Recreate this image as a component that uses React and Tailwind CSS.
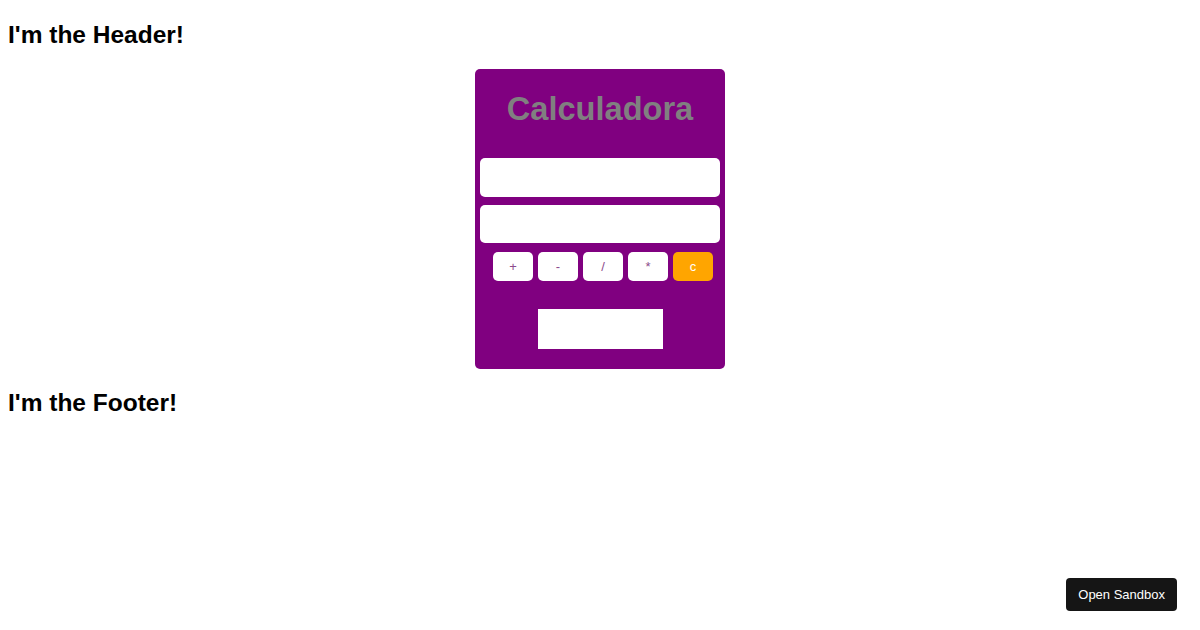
export default function App() {
  const ops = ["+", "-", "/", "*"];

  return (
    <div className="min-h-[630px] bg-white px-[8px] font-['Liberation_Sans',Arial,sans-serif] text-black">
      <h2 className="pt-[21px] text-[24.5px] font-bold leading-[27px]">I'm the Header!</h2>

      <div className="mx-auto mt-[21px] flex w-[250px] flex-col rounded-[5px] bg-[#800080] px-[5px] pt-[21px] pb-[20px]">
        <h1 className="text-center text-[32.6px] font-bold leading-[37px] text-[#808080]">Calculadora</h1>

        <input className="mt-[31px] h-[39px] w-full rounded-[5px] bg-white px-2 outline-none" />
        <input className="mt-[8px] h-[38px] w-full rounded-[5px] bg-white px-2 outline-none" />

        <div className="mt-[9px] flex gap-[5px] pl-[13px]">
          {ops.map((op) => (
            <button
              key={op}
              className="h-[29px] w-[40px] rounded-[5px] bg-white text-[13px] font-normal text-[#8c4a8c]"
            >
              {op}
            </button>
          ))}
          <button className="h-[29px] w-[40px] rounded-[5px] bg-[#ffa500] text-[13px] font-normal text-white">
            c
          </button>
        </div>

        <div className="mx-auto mt-[28px] h-[40px] w-[125px] bg-white"></div>
      </div>

      <h2 className="mt-[20px] text-[24.5px] font-bold leading-[27px]">I'm the Footer!</h2>

      <button className="fixed right-[23px] bottom-[19px] h-[33px] rounded-[4px] bg-[#151515] px-[12px] text-[13px] text-white">
        Open Sandbox
      </button>
    </div>
  );
}
